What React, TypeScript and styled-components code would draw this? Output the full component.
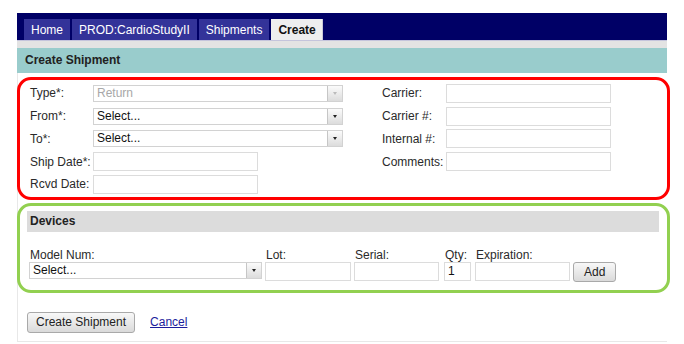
import React from 'react';
import styled, { createGlobalStyle } from 'styled-components';

const GlobalStyle = createGlobalStyle`
  html, body { margin: 0; padding: 0; background: #fff; }
  body {
    font-family: "Liberation Sans", Arial, sans-serif;
    font-size: 12px;
    color: #333;
  }
`;

const Page = styled.div`
  width: 650px;
  margin: 13px 0 0 17px;
`;

const NavBar = styled.nav`
  display: flex;
  gap: 2px;
  height: 27px;
  box-sizing: border-box;
  padding: 6px 0 0 7px;
  background: #000066;
`;

const Tab = styled.a<{ $active?: boolean }>`
  display: flex;
  align-items: center;
  padding: 0 7px;
  font-size: 12px;
  text-decoration: none;
  background: ${(p) => (p.$active ? '#eeeeee' : '#333399')};
  color: ${(p) => (p.$active ? '#111' : '#fff')};
  font-weight: ${(p) => (p.$active ? 700 : 400)};
  box-shadow: ${(p) => (p.$active ? 'inset -1px 0 0 #c8c8d8' : 'none')};
`;

const SubStrip = styled.div`
  height: 8px;
  box-sizing: border-box;
  border-top: 1px solid #c4c4dc;
  background: #e3e3e3;
`;

const PageTitle = styled.h1`
  margin: 0;
  height: 25px;
  line-height: 25px;
  padding-left: 8px;
  background: #99cccc;
  font-size: 12px;
  font-weight: 700;
  color: #222;
`;

const Body = styled.div`
  border-left: 1px solid #e8e8e8;
  border-bottom: 1px solid #e8e8e8;
  padding: 4px 0 8px 0;
`;

const ShipmentBox = styled.section`
  display: flex;
  width: 653px;
  box-sizing: border-box;
  margin-left: -1px;
  padding: 2px 0 1px 10px;
  border: 3px solid #ff0000;
  border-radius: 14px;
`;

const FieldColumn = styled.div<{ $label: number; $control: number; $offset?: number }>`
  display: grid;
  grid-template-columns: ${(p) => p.$label}px ${(p) => p.$control}px;
  grid-auto-rows: 22.75px;
  align-items: center;
  margin-left: ${(p) => p.$offset ?? 0}px;
`;

const Label = styled.label`
  font-size: 12px;
  color: #2a2a2a;
  white-space: nowrap;
`;

const SelectBox = styled.div<{ $w: number; $disabled?: boolean }>`
  display: flex;
  width: ${(p) => p.$w}px;
  height: 17px;
  box-sizing: border-box;
  border: 1px solid #d2d2d2;
  background: #fff;
  color: ${(p) => (p.$disabled ? '#a8a8a8' : '#111')};
  font-size: 12px;
`;

const SelectValue = styled.span`
  flex: 1;
  padding-left: 3px;
  line-height: 15px;
  white-space: nowrap;
  overflow: hidden;
`;

const SelectButton = styled.span<{ $disabled?: boolean }>`
  display: flex;
  align-items: center;
  justify-content: center;
  width: 14px;
  border-left: 1px solid #c6c6c6;
  background: linear-gradient(#fbfbfb, #dcdcdc);
  &::after {
    content: '';
    width: 0;
    height: 0;
    border-left: 2px solid transparent;
    border-right: 2px solid transparent;
    border-top: 3px solid ${(p) => (p.$disabled ? '#bbb' : '#222')};
  }
`;

const TextField = styled.input<{ $w: number }>`
  width: ${(p) => p.$w}px;
  height: 19px;
  box-sizing: border-box;
  margin: 0;
  padding: 0 3px;
  border: 1px solid #dcdcdc;
  font: 12px "Liberation Sans", Arial, sans-serif;
  color: #111;
  outline: none;
`;

const DevicesBox = styled.section`
  width: 653px;
  box-sizing: border-box;
  margin: 3px 0 0 -1px;
  padding: 5px 8px 8px 7px;
  border: 3px solid #92d050;
  border-radius: 14px;
`;

const DevicesHeader = styled.h2`
  margin: 0;
  height: 21px;
  line-height: 21px;
  padding-left: 3px;
  background: #dcdcdc;
  font-size: 12px;
  font-weight: 700;
  color: #222;
`;

const DeviceGrid = styled.div`
  display: grid;
  grid-template-columns: 236px 89px 90px 31px 98px auto;
  grid-template-rows: 14px 20px;
  align-items: start;
  justify-items: start;
  margin-top: 16px;
  padding-left: 2px;
  & > label {
    line-height: 14px;
    padding-left: 1px;
  }
`;

const Button = styled.button<{ $h: number; $pad: number }>`
  height: ${(p) => p.$h}px;
  margin: 0;
  padding: 0 ${(p) => p.$pad}px;
  border: 1px solid #a9a9a9;
  border-radius: 3px;
  background: linear-gradient(#f8f8f8, #dadada);
  font: 12px "Liberation Sans", Arial, sans-serif;
  color: #222;
  cursor: pointer;
`;

const Actions = styled.div`
  display: flex;
  align-items: center;
  gap: 15px;
  margin-top: 19px;
  padding-left: 9px;
`;

const CancelLink = styled.a`
  color: #1c1c9c;
  text-decoration: underline;
  font-size: 12px;
`;

function FakeSelect({ w, value, disabled }: { w: number; value: string; disabled?: boolean }) {
  return (
    <SelectBox $w={w} $disabled={disabled}>
      <SelectValue>{value}</SelectValue>
      <SelectButton $disabled={disabled} />
    </SelectBox>
  );
}

export default function App() {
  return (
    <>
      <GlobalStyle />
      <Page>
        <NavBar>
          <Tab>Home</Tab>
          <Tab>PROD:CardioStudyII</Tab>
          <Tab>Shipments</Tab>
          <Tab $active>Create</Tab>
        </NavBar>
        <SubStrip />
        <PageTitle>Create Shipment</PageTitle>
        <Body>
          <ShipmentBox>
            <FieldColumn $label={63} $control={250}>
              <Label>Type*:</Label>
              <FakeSelect w={250} value="Return" disabled />
              <Label>From*:</Label>
              <FakeSelect w={250} value="Select..." />
              <Label>To*:</Label>
              <FakeSelect w={250} value="Select..." />
              <Label>Ship Date*:</Label>
              <TextField $w={165} />
              <Label>Rcvd Date:</Label>
              <TextField $w={165} />
            </FieldColumn>
            <FieldColumn $label={64} $control={165} $offset={39}>
              <Label>Carrier:</Label>
              <TextField $w={165} />
              <Label>Carrier #:</Label>
              <TextField $w={165} />
              <Label>Internal #:</Label>
              <TextField $w={165} />
              <Label>Comments:</Label>
              <TextField $w={165} />
            </FieldColumn>
          </ShipmentBox>
          <DevicesBox>
            <DevicesHeader>Devices</DevicesHeader>
            <DeviceGrid>
              <Label>Model Num:</Label>
              <Label>Lot:</Label>
              <Label>Serial:</Label>
              <Label>Qty:</Label>
              <Label>Expiration:</Label>
              <span />
              <FakeSelect w={233} value="Select..." />
              <TextField $w={86} />
              <TextField $w={85} />
              <TextField $w={27} defaultValue="1" />
              <TextField $w={95} />
              <Button $h={20} $pad={10}>Add</Button>
            </DeviceGrid>
          </DevicesBox>
          <Actions>
            <Button $h={21} $pad={8}>Create Shipment</Button>
            <CancelLink href="#">Cancel</CancelLink>
          </Actions>
        </Body>
      </Page>
    </>
  );
}
